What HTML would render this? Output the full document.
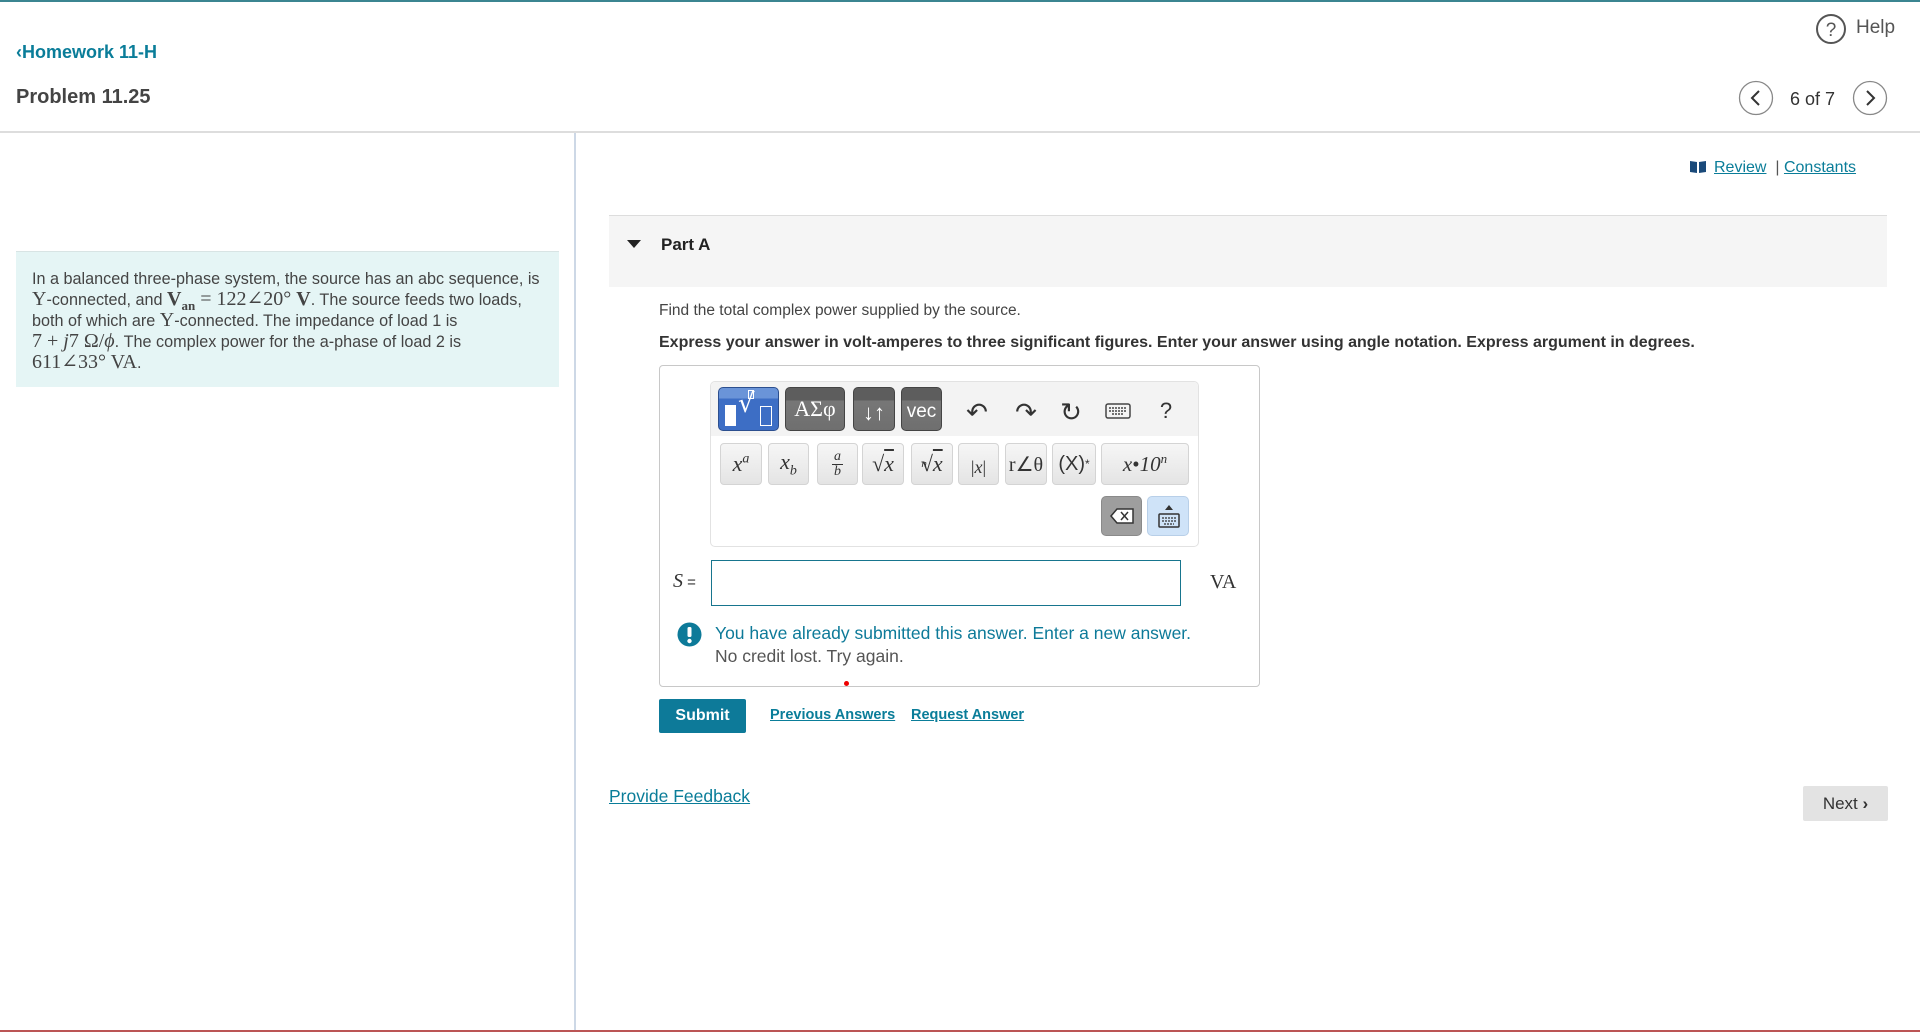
<!DOCTYPE html>
<html><head><meta charset="utf-8">
<style>
*{box-sizing:border-box;margin:0;padding:0}
body{width:1920px;height:1032px;position:relative;background:#fff;font-family:"Liberation Sans",Arial,sans-serif;color:#333;overflow:hidden}
.a{position:absolute}
.ser{font-family:"Liberation Serif","DejaVu Serif",serif}
.m{font-family:"Liberation Serif","DejaVu Serif",serif;font-size:20px;line-height:1}
.btn{position:absolute;border:1px solid #d4d4d4;border-radius:4px;background:linear-gradient(#f6f6f6,#e4e4e4);display:flex;align-items:center;justify-content:center;font-family:"Liberation Serif",serif;font-size:22px;color:#333}
.dk{position:absolute;border-radius:5px;background:linear-gradient(#5d5d5d 0,#5d5d5d 30%,#777 30%,#6f6f6f 100%);border:1px solid #444;color:#fff;display:flex;align-items:center;justify-content:center;font-size:22px}
.ic{position:absolute;top:397px;font-size:24px;color:#333;transform:translateX(-50%)}
a{color:#0a7d99}
</style></head><body>
<div class="a" style="left:0;top:0;width:1920px;height:2px;background:#3b8591"></div>

<svg class="a" style="left:1815px;top:13px" width="32" height="32" viewBox="0 0 32 32"><circle cx="16" cy="16" r="14" fill="none" stroke="#555" stroke-width="2"/><text x="16" y="23" text-anchor="middle" font-family="Liberation Sans" font-size="19" fill="#555">?</text></svg>
<div class="a" style="left:1856px;top:17px;font-size:19px;color:#555">Help</div>

<div class="a" style="left:16px;top:42px;font-size:18px;font-weight:bold;color:#0a7d99">&#x2039;Homework 11-H</div>
<div class="a" style="left:16px;top:86px;font-size:20px;font-weight:bold;color:#444">Problem 11.25</div>

<svg class="a" style="left:1738px;top:80px" width="36" height="36"><circle cx="18" cy="18" r="16.5" fill="#fff" stroke="#888" stroke-width="1.3"/><path d="M21 11 L14 18 L21 25" fill="none" stroke="#333" stroke-width="2"/></svg>
<div class="a" style="left:1790px;top:89px;font-size:18px;color:#333">6 of 7</div>
<svg class="a" style="left:1852px;top:80px" width="36" height="36"><circle cx="18" cy="18" r="16.5" fill="#fff" stroke="#888" stroke-width="1.3"/><path d="M15 11 L22 18 L15 25" fill="none" stroke="#333" stroke-width="2"/></svg>

<div class="a" style="left:0;top:131px;width:1920px;height:2px;background:#ddd"></div>
<div class="a" style="left:574px;top:133px;width:2px;height:899px;background:#cdd8e6"></div>
<div class="a" style="left:0;top:1030px;width:1920px;height:2px;background:#b55"></div>

<div class="a" style="left:16px;top:251px;width:543px;height:136px;background:#e5f5f5;border-top:1px solid #d8e4e4"></div>
<div class="a" style="left:32px;top:269px;width:530px;font-size:16.2px;line-height:20px;color:#444;white-space:nowrap">In a balanced three-phase system, the source has an abc sequence, is<br><span class="m">Y</span>-connected, and <span class="m"><b>V</b><sub style="font-size:13px;line-height:0"><b>an</b></sub> = 122∠20° <b>V</b></span>. The source feeds two loads,<br>both of which are <span class="m">Y</span>-connected. The impedance of load 1 is<br><span class="m">7 + <i>j</i>7 Ω/<i>ϕ</i></span>. The complex power for the a-phase of load 2 is<br><span class="m">611∠33° VA</span>.</div>

<svg class="a" style="left:1689px;top:160px" width="18" height="14"><path d="M1 1 L8 2 L8 13 L1 12Z M10 2 L17 1 L17 12 L10 13Z" fill="#1a4a7a"/></svg>
<div class="a" style="left:1714px;top:159px;font-size:16px"><a style="text-decoration:underline">Review</a> <span style="color:#555">&nbsp;|&nbsp;</span><a style="text-decoration:underline">Constants</a></div>

<div class="a" style="left:609px;top:215px;width:1278px;height:72px;background:#f5f5f5;border-top:1px solid #ddd"></div>
<svg class="a" style="left:626px;top:238px" width="16" height="12"><path d="M1 2 L15 2 L8 10Z" fill="#222"/></svg>
<div class="a" style="left:661px;top:235px;font-size:17px;font-weight:bold;color:#222">Part A</div>

<div class="a" style="left:659px;top:302px;font-size:15.5px;color:#444">Find the total complex power supplied by the source.</div>
<div class="a" style="left:659px;top:334px;font-size:16px;font-weight:bold;color:#333">Express your answer in volt-amperes to three significant figures. Enter your answer using angle notation. Express argument in degrees.</div>

<div class="a" style="left:659px;top:365px;width:601px;height:322px;border:1px solid #c8c8c8;border-radius:4px"></div>
<div class="a" style="left:710px;top:381px;width:489px;height:166px;border:1px solid #e2e2e2;border-radius:5px;background:#fff;overflow:hidden"><div style="height:54px;background:#f3f3f3"></div></div>

<div class="a" style="left:718px;top:387px;width:61px;height:44px;border-radius:5px;background:linear-gradient(#6a94d8 0,#6a94d8 25%,#3d6ec5 25%);border:1px solid #2c4f8f"></div>
<div class="a" style="left:725px;top:405px;width:11px;height:21px;background:#fff"></div>
<div class="a" style="left:738px;top:389px;font-size:26px;color:#fff;font-family:'DejaVu Sans'">√</div>
<div class="a" style="left:748px;top:390px;width:6px;height:9px;border:1.5px solid #fff"></div>
<div class="a" style="left:760px;top:406px;width:12px;height:20px;border:1.5px solid #fff"></div>
<div class="dk" style="left:785px;top:387px;width:60px;height:44px;font-family:'Liberation Serif',serif">ΑΣφ</div>
<div class="dk" style="left:853px;top:387px;width:42px;height:44px;padding-top:8px">↓↑</div>
<div class="dk" style="left:901px;top:387px;width:41px;height:44px;padding-top:6px;font-size:19px">vec</div>
<div class="ic" style="left:977px;font-size:26px">↶</div>
<div class="ic" style="left:1026px;font-size:26px">↷</div>
<div class="ic" style="left:1071px;font-size:26px">↻</div>
<svg class="a" style="left:1105px;top:403px" width="26" height="16"><rect x="1" y="1" width="24" height="14" rx="2" fill="none" stroke="#444" stroke-width="1.5"/><path d="M4 5h18M4 8h18M7 11h12" stroke="#444" stroke-width="1.5" stroke-dasharray="2 1"/></svg>
<div class="ic" style="left:1166px;font-family:'Liberation Sans';font-size:22px;top:398px">?</div>

<div class="btn" style="left:720px;top:443px;width:42px;height:42px"><i>x<sup style="font-size:14px">a</sup></i></div>
<div class="btn" style="left:768px;top:443px;width:41px;height:42px"><i>x<sub style="font-size:14px">b</sub></i></div>
<div class="btn" style="left:817px;top:443px;width:41px;height:42px;flex-direction:column;font-size:14px;line-height:14px"><i>a</i><span style="width:11px;border-top:1px solid #333"></span><i>b</i></div>
<div class="btn" style="left:862px;top:443px;width:42px;height:42px">√<i style="text-decoration:overline">x</i></div>
<div class="btn" style="left:911px;top:443px;width:42px;height:42px"><sup style="font-size:11px;margin-right:-6px"><i>n</i></sup>√<i style="text-decoration:overline">x</i></div>
<div class="btn" style="left:958px;top:443px;width:41px;height:42px;font-size:18px;padding-top:6px">|<i>x</i>|</div>
<div class="btn" style="left:1005px;top:443px;width:42px;height:42px;font-size:20px">r∠θ</div>
<div class="btn" style="left:1052px;top:443px;width:44px;height:42px;font-family:'Liberation Sans';font-size:20px">(X)<sup style="font-size:12px">*</sup></div>
<div class="btn" style="left:1101px;top:443px;width:88px;height:42px;font-size:21px"><i>x</i>•<i>10<sup style="font-size:13px">n</sup></i></div>
<div class="a" style="left:1101px;top:496px;width:41px;height:40px;border-radius:5px;background:#9e9e9e;border:1px solid #8a8a8a"></div>
<svg class="a" style="left:1109px;top:507px" width="26" height="18"><path d="M8 2H24V16H8L2 9Z" fill="#fff" stroke="#333" stroke-width="1.5"/><path d="M12 5L19 13M19 5L12 13" stroke="#333" stroke-width="1.5"/></svg>
<div class="a" style="left:1147px;top:496px;width:42px;height:40px;border-radius:5px;background:#cfe3f8;border:1px solid #b8cfe8"></div>
<svg class="a" style="left:1158px;top:503px" width="22" height="28"><path d="M7 7L11 2L15 7Z" fill="#333"/><rect x="1" y="11" width="20" height="13" rx="1" fill="none" stroke="#333" stroke-width="1.5"/><path d="M4 15h14M4 18h14M6 21h10" stroke="#333" stroke-width="1.3" stroke-dasharray="2 1"/></svg>

<div class="a ser" style="left:673px;top:570px;font-size:20px;color:#333"><i>S</i><span style="font-family:'Liberation Sans';font-size:15px"> =</span></div>
<div class="a" style="left:711px;top:560px;width:470px;height:46px;border:1px solid #17758e"></div>
<div class="a ser" style="left:1210px;top:571px;font-size:20px;color:#333">VA</div>

<svg class="a" style="left:677px;top:622px" width="25" height="25"><circle cx="12.5" cy="12.5" r="12" fill="#0d7a99"/><rect x="10.5" y="5" width="4" height="10" rx="1.5" fill="#fff"/><circle cx="12.5" cy="19" r="2.2" fill="#fff"/></svg>
<div class="a" style="left:715px;top:622px;font-size:17.5px;line-height:23px;color:#0d7a99">You have already submitted this answer. Enter a new answer.<br><span style="color:#555">No credit lost. Try again.</span></div>
<div class="a" style="left:844px;top:681px;width:5px;height:5px;border-radius:50%;background:#e00"></div>

<div class="a" style="left:659px;top:699px;width:87px;height:34px;background:#0d7a99;border-radius:2px;color:#fff;font-weight:bold;font-size:16px;text-align:center;line-height:34px">Submit</div>
<div class="a" style="left:770px;top:707px;font-size:14.5px;font-weight:bold"><a style="text-decoration:underline">Previous Answers</a></div>
<div class="a" style="left:911px;top:707px;font-size:14.5px;font-weight:bold"><a style="text-decoration:underline">Request Answer</a></div>

<div class="a" style="left:609px;top:786px;font-size:17.5px"><a style="text-decoration:underline">Provide Feedback</a></div>
<div class="a" style="left:1803px;top:786px;width:85px;height:35px;background:#e3e3e3;border-radius:2px;font-size:17px;color:#333;line-height:35px;text-align:center">Next <b>&#x203A;</b></div>
</body></html>
